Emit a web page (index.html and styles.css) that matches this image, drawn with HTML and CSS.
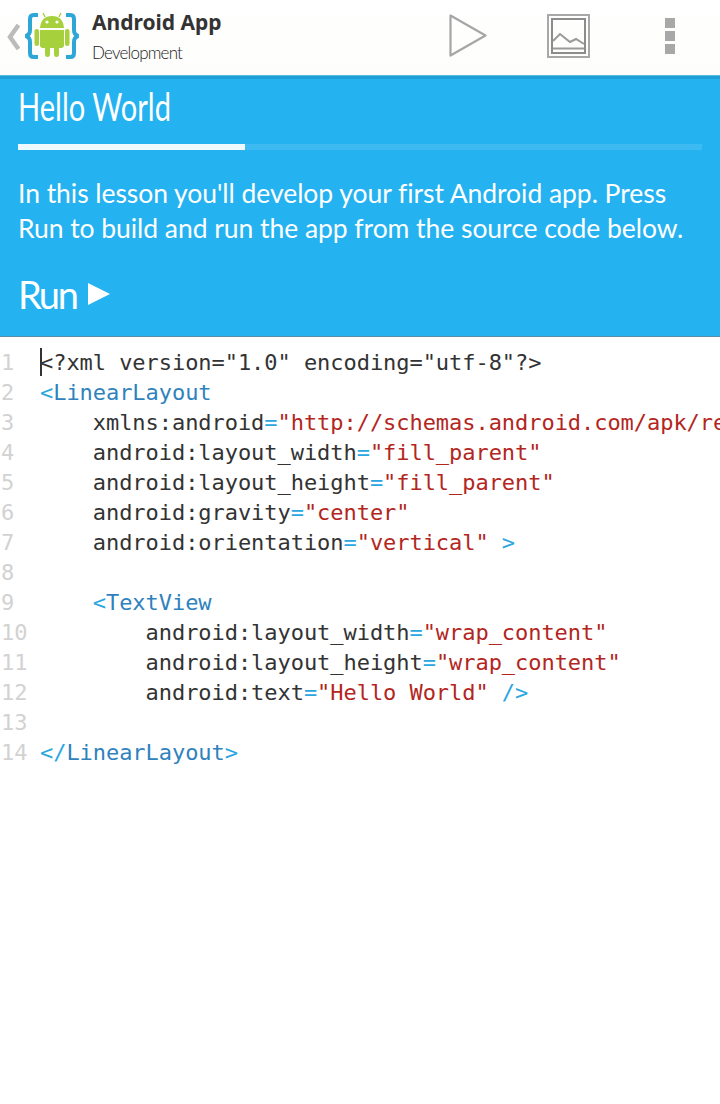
FILE: index.html
```html
<!DOCTYPE html>
<html lang="en">
<head>
<meta charset="utf-8">
<title>Android App Development</title>
<link rel="stylesheet" href="styles.css">
</head>
<body>
<header class="bar">
  <svg class="back" width="14" height="26" viewBox="0 0 14 26"><path d="M12.500 1 L4 13 L12.500 25" fill="none" stroke="#bcbcbc" stroke-width="4.500"/></svg>
  <svg class="logo" width="56" height="52" viewBox="0 0 56 52">
    <path d="M14 4 H9.500 Q6 4 6 8 V19 Q6 24 1.500 25 Q6 26 6 31 V42 Q6 46 9.500 46 H14" fill="none" stroke="#2ea6d6" stroke-width="4"/>
    <path d="M42 4 H46.500 Q50 4 50 8 V19 Q50 24 54.500 25 Q50 26 50 31 V42 Q50 46 46.500 46 H42" fill="none" stroke="#2ea6d6" stroke-width="4"/>
    <path d="M16 17 Q17 5 28 5 Q39 5 40 17 Z" fill="#a6d03c"/>
    <path d="M21 6 L19 2 M35 6 L37 2" stroke="#a6d03c" stroke-width="1.400"/>
    <circle cx="23" cy="11" r="1.600" fill="#fff"/><circle cx="33" cy="11" r="1.600" fill="#fff"/>
    <path d="M16 19 H40 V34 Q40 37 37 37 H35 V43 Q35 46 32.500 46 Q30 46 30 43 V37 H26 V43 Q26 46 23.500 46 Q21 46 21 43 V37 H19 Q16 37 16 34 Z" fill="#a6d03c"/>
    <rect x="10.500" y="18" width="4.500" height="17" rx="2.200" fill="#a6d03c"/>
    <rect x="41" y="18" width="4.500" height="17" rx="2.200" fill="#a6d03c"/>
  </svg>
  <div class="brand">
    <div class="brand-title">Android App</div>
    <div class="brand-sub">Development</div>
  </div>
  <nav class="actions">
    <svg class="act-play" width="38" height="44" viewBox="0 0 38 44"><path d="M1.500 1.500 L36.500 21.500 L1.500 41.500 Z" fill="none" stroke="#a6a6a6" stroke-width="2.200" stroke-linejoin="round"/></svg>
    <svg class="act-image" width="43" height="44" viewBox="0 0 43 44">
      <rect x="1" y="1" width="41" height="42" fill="none" stroke="#a8a8a8" stroke-width="2"/>
      <rect x="5" y="5" width="33" height="34" fill="none" stroke="#8c8c8c" stroke-width="2"/>
      <path d="M6 27 L13 20 L23 28 L29 25 L37 30 M6 34.500 H37" fill="none" stroke="#9a9a9a" stroke-width="2"/>
    </svg>
    <div class="dots"><span></span><span></span><span></span></div>
  </nav>
</header>
<section class="lesson">
  <h1 class="lesson-title">Hello World</h1>
  <div class="track"><div class="track-fill"></div></div>
  <p class="lesson-text">In this lesson you'll develop your first Android app. Press<br>Run to build and run the app from the source code below.</p>
  <div class="run">Run <svg width="22" height="22" viewBox="0 0 22 22"><path d="M0 0 L22 11 L0 22 Z" fill="#fff"/></svg></div>
</section>
<main class="editor">
  <div class="gutter">
    <div>1</div><div>2</div><div>3</div><div>4</div><div>5</div><div>6</div><div>7</div><div>8</div><div>9</div><div>10</div><div>11</div><div>12</div><div>13</div><div>14</div>
  </div>
<pre class="code"><span class="cursor"></span>&lt;?xml version="1.0" encoding="utf-8"?&gt;
<i class="p">&lt;</i><b class="t">LinearLayout</b>
    xmlns:android<i class="p">=</i><u class="s">"http://schemas.android.com/apk/res/android"</u>
    android:layout_width<i class="p">=</i><u class="s">"fill_parent"</u>
    android:layout_height<i class="p">=</i><u class="s">"fill_parent"</u>
    android:gravity<i class="p">=</i><u class="s">"center"</u>
    android:orientation<i class="p">=</i><u class="s">"vertical"</u> <i class="p">&gt;</i>

    <i class="p">&lt;</i><b class="t">TextView</b>
        android:layout_width<i class="p">=</i><u class="s">"wrap_content"</u>
        android:layout_height<i class="p">=</i><u class="s">"wrap_content"</u>
        android:text<i class="p">=</i><u class="s">"Hello World"</u> <i class="p">/&gt;</i>

<i class="p">&lt;/</i><b class="t">LinearLayout</b><i class="p">&gt;</i></pre>
</main>
</body>
</html>
```
FILE: styles.css
```css
* { box-sizing: border-box; }
html, body { margin: 0; padding: 0; }
body {
  width: 720px;
  height: 1104px;
  overflow: hidden;
  background: #fff;
  font-family: "Lato", sans-serif;
}
.bar {
  height: 79px;
  display: flex;
  align-items: flex-start;
  background: linear-gradient(#ffffff, #fdfdfb);
  border-bottom: 3px solid #1f9fd8;
  box-shadow: inset 0 -1px 0 #58bddc;
}
.back { margin: 24px 0 0 6px; flex: none; }
.logo { margin: 11px 0 0 4px; flex: none; }
.brand { margin: 8px 0 0 12px; }
.brand-title {
  font-family: "Noto Sans", sans-serif;
  font-weight: 700;
  font-size: 21px;
  line-height: 29px;
  color: #333;
}
.brand-sub {
  font-weight: 300;
  font-size: 17px;
  line-height: 26px;
  margin-top: 3px;
  letter-spacing: -0.800px;
  color: #222;
}
.actions {
  margin-left: auto;
  display: flex;
  align-items: flex-start;
  padding-top: 14px;
  padding-right: 45px;
}
.act-play { margin-right: 60px; }
.act-image { margin-right: 75px; }
.dots {
  display: flex;
  flex-direction: column;
  gap: 3px;
  padding-top: 4px;
}
.dots span { width: 10px; height: 10px; background: #a8a8a8; }
.lesson {
  height: 258px;
  background: #25b2f1;
  color: #fff;
  padding: 4px 18px 0;
  border-bottom: 1px solid #5a8ea6;
}
.lesson-title {
  margin: 0;
  font-size: 38px;
  line-height: 46px;
  font-weight: 400;
  width: max-content;
  transform: scaleX(0.765);
  transform-origin: left center;
}
.track {
  margin-top: 15px;
  height: 6px;
  width: 684px;
  background: #3dbaf2;
}
.track-fill { width: 227px; height: 6px; background: #eef9fe; }
.lesson-text {
  margin: 26px 0 0;
  font-size: 26.500px;
  line-height: 35px;
  font-weight: 400;
  white-space: nowrap;
  letter-spacing: -0.050px;
}
.run {
  margin-top: 24px;
  font-size: 38px;
  line-height: 48px;
  font-weight: 400;
  letter-spacing: -2.200px;
  display: flex;
  align-items: center;
  gap: 11px;
}
.editor {
  display: flex;
  padding-top: 11px;
  font-family: "DejaVu Sans Mono", monospace;
  font-size: 22px;
  line-height: 30px;
}
.gutter {
  width: 40px;
  color: #d2d2d2;
  flex: none;
  padding-left: 1px;
}
.code {
  position: relative;
  margin: 0;
  font: inherit;
  letter-spacing: -0.050px;
  color: #333;
  white-space: pre;
  overflow: hidden;
}
.cursor {
  position: absolute;
  left: 0;
  top: 0;
  width: 2px;
  height: 28px;
  background: #333;
}
.code i, .code b, .code u { font-style: normal; font-weight: 400; text-decoration: none; }
.p { color: #2aa6e0; }
.t { color: #2f82bd; }
.s { color: #b3261e; }
```
